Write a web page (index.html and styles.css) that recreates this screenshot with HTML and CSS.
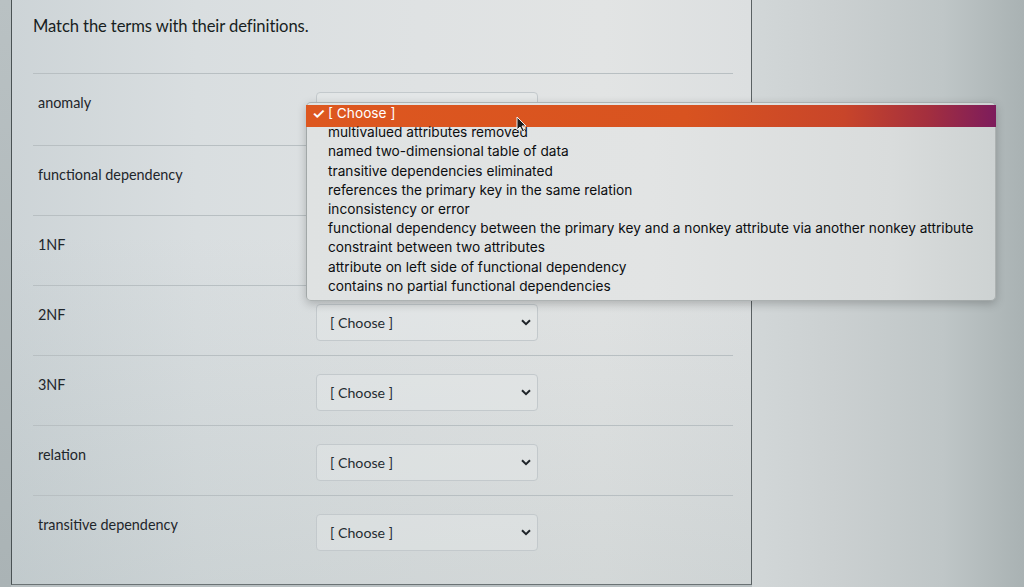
FILE: index.html
```html
<!DOCTYPE html>
<html lang="en">
<head>
<meta charset="utf-8">
<title>Match the terms</title>
<link rel="stylesheet" href="styles.css">
</head>
<body>
<div class="screen">
  <div class="strip"></div>
  <main class="panel">
    <h1 class="title">Match the terms with their definitions.</h1>
    <div class="rows">
      <div class="row row-first">
        <div class="term">anomaly</div>
        <div class="select select-covered"><span>[ Choose ]</span><svg class="chev" viewBox="0 0 10 7" width="10" height="7"><path d="M1 1.2 L5 5.2 L9 1.2" fill="none" stroke="#1f2429" stroke-width="2"/></svg></div>
      </div>
      <div class="row">
        <div class="term">functional dependency</div>
        <div class="select select-covered"><span>[ Choose ]</span><svg class="chev" viewBox="0 0 10 7" width="10" height="7"><path d="M1 1.2 L5 5.2 L9 1.2" fill="none" stroke="#1f2429" stroke-width="2"/></svg></div>
      </div>
      <div class="row">
        <div class="term">1NF</div>
        <div class="select select-covered"><span>[ Choose ]</span><svg class="chev" viewBox="0 0 10 7" width="10" height="7"><path d="M1 1.2 L5 5.2 L9 1.2" fill="none" stroke="#1f2429" stroke-width="2"/></svg></div>
      </div>
      <div class="row">
        <div class="term">2NF</div>
        <div class="select"><span>[ Choose ]</span><svg class="chev" viewBox="0 0 10 7" width="10" height="7"><path d="M1 1.2 L5 5.2 L9 1.2" fill="none" stroke="#1f2429" stroke-width="2"/></svg></div>
      </div>
      <div class="row">
        <div class="term">3NF</div>
        <div class="select"><span>[ Choose ]</span><svg class="chev" viewBox="0 0 10 7" width="10" height="7"><path d="M1 1.2 L5 5.2 L9 1.2" fill="none" stroke="#1f2429" stroke-width="2"/></svg></div>
      </div>
      <div class="row">
        <div class="term">relation</div>
        <div class="select"><span>[ Choose ]</span><svg class="chev" viewBox="0 0 10 7" width="10" height="7"><path d="M1 1.2 L5 5.2 L9 1.2" fill="none" stroke="#1f2429" stroke-width="2"/></svg></div>
      </div>
      <div class="row">
        <div class="term">transitive dependency</div>
        <div class="select"><span>[ Choose ]</span><svg class="chev" viewBox="0 0 10 7" width="10" height="7"><path d="M1 1.2 L5 5.2 L9 1.2" fill="none" stroke="#1f2429" stroke-width="2"/></svg></div>
      </div>
    </div>
  </main>
  <div class="rest"></div>

  <ul class="popup">
    <li class="opt opt-selected"><span class="check">✓</span>[ Choose ]</li>
    <li class="opt">multivalued attributes removed</li>
    <li class="opt">named two-dimensional table of data</li>
    <li class="opt">transitive dependencies eliminated</li>
    <li class="opt">references the primary key in the same relation</li>
    <li class="opt">inconsistency or error</li>
    <li class="opt">functional dependency between the primary key and a nonkey attribute via another nonkey attribute</li>
    <li class="opt">constraint between two attributes</li>
    <li class="opt">attribute on left side of functional dependency</li>
    <li class="opt">contains no partial functional dependencies</li>
  </ul>

  <svg class="cursor" viewBox="0 0 11 17" width="11" height="17"><path d="M1 1 L1 14 L4 11 L6.5 16 L8.5 15 L6 10 L10 10 Z" fill="#1b1b1b" stroke="#f2f2f2" stroke-width="1"/></svg>
</div>
</body>
</html>
```

FILE: styles.css
```css
html, body {
  margin: 0;
  padding: 0;
}
body {
  width: 1024px;
  height: 587px;
  overflow: hidden;
  background: #b9c0c2;
}
.screen {
  position: relative;
  display: flex;
  width: 1024px;
  height: 587px;
}
.strip {
  width: 11px;
  flex: none;
  background: linear-gradient(180deg, #b9c1c3 0%, #aab3b5 100%);
}
.panel {
  width: 741px;
  height: 585px;
  flex: none;
  box-sizing: border-box;
  border-left: 1px solid #4a5254;
  border-right: 1px solid #5a6163;
  border-bottom: 1px solid #6a7274;
  background:
    linear-gradient(180deg, rgba(255,255,255,0) 40%, rgba(120,140,140,0.14) 100%),
    linear-gradient(90deg, #cdd4d7 0%, #d9dee0 25%, #dfe2e3 55%, #e2e4e4 80%, #dcdfe0 100%);
  padding: 15px 0 0 21px;
  font-family: Lato, "Liberation Sans", sans-serif;
  color: #2d3b45;
}
.title {
  margin: 0;
  font-size: 16.6px;
  line-height: 22px;
  font-weight: 400;
  color: #181e22;
  letter-spacing: -0.1px;
}
.rows {
  margin-top: 36px;
  width: 700px;
}
.row {
  display: flex;
  align-items: flex-start;
  height: 70px;
  box-sizing: border-box;
  border-top: 1px solid #b8bfc2;
}
.row-first {
  height: 72px;
}
.term {
  width: 278px;
  padding: 20px 0 0 5px;
  font-size: 14.4px;
  line-height: 18px;
  color: #1f262b;
}
.select {
  margin-top: 18px;
  width: 222px;
  height: 37px;
  box-sizing: border-box;
  border: 1px solid #c3c9cc;
  border-radius: 4px;
  background: rgba(236,238,238,0.35);
  display: flex;
  align-items: center;
  justify-content: space-between;
  padding: 0 6px 0 13px;
  font-size: 14.2px;
  color: #252c31;
}
.select-covered span {
  visibility: hidden;
}
.chev {
  display: block;
}
.rest {
  flex: 1;
  height: 587px;
  background: linear-gradient(90deg, #d2d7d8 0%, #cbd0d1 30%, #bfc6c7 70%, #a9b2b3 100%);
}
.popup {
  position: absolute;
  left: 306px;
  top: 102px;
  width: 690px;
  height: 199px;
  box-sizing: border-box;
  margin: 0;
  padding: 1px 0 0 0;
  list-style: none;
  background: linear-gradient(90deg, #dfe2e2 0%, #e2e4e4 50%, #d9dcdc 85%, #cdd2d2 100%);
  border: 1px solid rgba(80,90,90,0.35);
  border-radius: 5px;
  box-shadow: 0 3px 10px rgba(0,0,0,0.22);
  font-family: Inter, "Noto Sans", sans-serif;
  font-size: 13.7px;
  color: #0c0e10;
}
.opt {
  position: relative;
  height: 19.2px;
  line-height: 19.2px;
  padding-left: 21px;
  white-space: nowrap;
}
.opt-selected {
  color: #fff;
  z-index: 0;
}
.opt-selected::before {
  content: "";
  position: absolute;
  left: -1px;
  right: -1px;
  top: 1px;
  bottom: -4px;
  z-index: -1;
  background: linear-gradient(90deg, #dd571f 0%, #d85320 55%, #c8452a 78%, #a42f3e 90%, #7d1c5c 100%);
}
.check {
  position: absolute;
  left: 5px;
  top: 0;
  font-size: 15px;
  font-weight: 600;
}
.cursor {
  position: absolute;
  left: 516px;
  top: 116px;
}
```
